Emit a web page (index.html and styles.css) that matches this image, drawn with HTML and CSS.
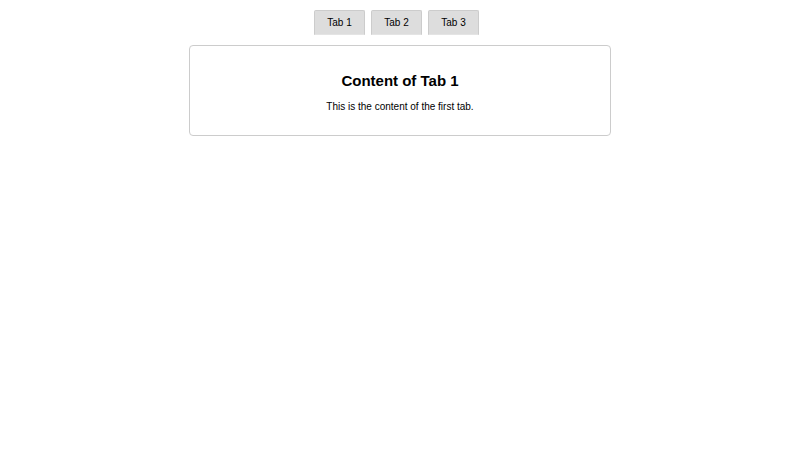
FILE: index.html
```html
<!DOCTYPE html>
<html>
<head>
<meta charset="utf-8">
<link rel="stylesheet" href="styles.css">
</head>
<body>
<div class="tabs">
  <button class="tab">Tab 1</button>
  <button class="tab">Tab 2</button>
  <button class="tab">Tab 3</button>
</div>
<div class="panel">
  <h2 class="panel-title">Content of Tab 1</h2>
  <p class="panel-text">This is the content of the first tab.</p>
</div>
</body>
</html>
```
FILE: styles.css
```css
html, body {
  margin: 0;
  padding: 0;
  background: #fff;
}
body {
  font-family: "Liberation Sans", Arial, sans-serif;
  font-size: 10px;
  color: #000;
  padding-top: 10px;
}
.tabs {
  display: flex;
  justify-content: center;
  gap: 6px;
  padding-right: 7px;
}
.tab {
  box-sizing: border-box;
  width: 51px;
  height: 25px;
  padding: 0;
  margin: 0;
  font-family: inherit;
  font-size: 10px;
  color: #000;
  background: #ddd;
  border: 1px solid #ccc;
  border-bottom-color: #e4e4e4;
  border-radius: 2px 2px 0 0;
}
.panel {
  box-sizing: border-box;
  width: 422px;
  height: 91px;
  margin: 10px auto 0;
  border: 1px solid #ccc;
  border-radius: 4px;
  text-align: center;
  padding-top: 25px;
}
.panel-title {
  margin: 0;
  font-size: 15px;
  line-height: 19px;
  font-weight: bold;
}
.panel-text {
  margin: 11px 0 0;
  font-size: 10px;
  line-height: 12px;
}
```
